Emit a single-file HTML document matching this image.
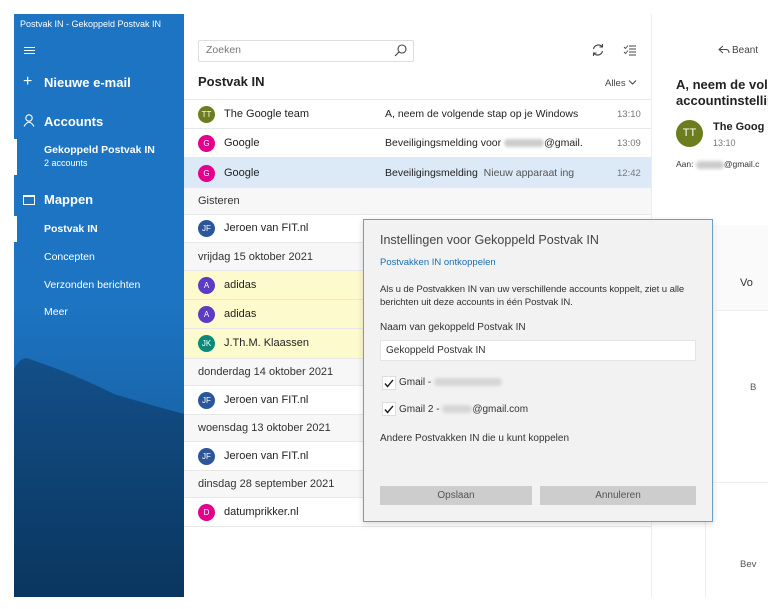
<!DOCTYPE html>
<html><head><meta charset="utf-8"><style>
*{margin:0;padding:0;box-sizing:border-box}
body{width:768px;height:609px;background:#fff;position:relative;overflow:hidden;font-family:"Liberation Sans",sans-serif;color:#222}
.a{position:absolute;white-space:nowrap}
#side{position:absolute;left:14px;top:14px;width:170px;height:583px;background:linear-gradient(#1d74c2 0,#1d74c2 290px,#1a6bb4 360px,#1865a8 420px);overflow:hidden}
.w{color:#fff}
.row{position:absolute;left:184px;width:467px;border-bottom:1px solid #e8e8e8}
.av{position:absolute;left:14px;width:17px;height:17px;border-radius:50%;color:#fff;font-size:8px;text-align:center;line-height:17px}
.nm{position:absolute;left:40px;font-size:11px;color:#222}
.hd{background:#f7f7f7}
.hd span{position:absolute;left:14px;font-size:11px;color:#333}
.sj{position:absolute;left:201px;font-size:10.5px;color:#222}
.tm{position:absolute;left:433px;font-size:9.5px;color:#777}
.blur{display:inline-block;width:40px;height:8px;background:#ccc;border-radius:4px;filter:blur(1.5px);vertical-align:middle}
</style></head><body>
<div id="side">
 <svg width="170" height="583" style="position:absolute;left:0;top:0">
  <defs><linearGradient id="m" x1="0" y1="0" x2="0" y2="1"><stop offset="0" stop-color="#134f88"/><stop offset="1" stop-color="#0a365f"/></linearGradient></defs>
  <path d="M0 355 Q8 340 18 346 Q60 360 100 380 Q140 392 170 400 L170 583 L0 583 Z" fill="url(#m)"/>
 </svg>
 <div class="a w" style="left:6px;top:5px;font-size:9px">Postvak IN - Gekoppeld Postvak IN</div>
 <div class="a" style="left:10px;top:33px;width:11px;height:1px;background:#fff;box-shadow:0 3px 0 #fff,0 6px 0 #fff"></div>
 <div class="a w" style="left:9px;top:59px;font-size:16px;font-weight:300">+</div>
 <div class="a w" style="left:30px;top:61px;font-size:13px;font-weight:bold">Nieuwe e-mail</div>
 <svg class="a" style="left:9px;top:100px" width="12" height="13"><circle cx="6" cy="4" r="3.2" fill="none" stroke="#fff" stroke-width="1.1"/><path d="M1 12.5 Q6 4 11 12.5" fill="none" stroke="#fff" stroke-width="1.1"/></svg>
 <div class="a w" style="left:30px;top:100px;font-size:13px;font-weight:bold">Accounts</div>
 <div class="a" style="left:0;top:125px;width:3px;height:36px;background:#fff"></div>
 <div class="a w" style="left:30px;top:130px;font-size:10.5px;font-weight:bold">Gekoppeld Postvak IN</div>
 <div class="a w" style="left:30px;top:144px;font-size:9px">2 accounts</div>
 <div class="a" style="left:9px;top:181px;width:12px;height:10px;border:1.2px solid #fff;border-top-width:2px"></div>
 <div class="a w" style="left:30px;top:178px;font-size:13px;font-weight:bold">Mappen</div>
 <div class="a" style="left:0;top:202px;width:3px;height:26px;background:#fff"></div>
 <div class="a w" style="left:30px;top:209px;font-size:10.5px;font-weight:bold">Postvak IN</div>
 <div class="a w" style="left:30px;top:237px;font-size:10.5px">Concepten</div>
 <div class="a w" style="left:30px;top:265px;font-size:10.5px">Verzonden berichten</div>
 <div class="a w" style="left:30px;top:292px;font-size:10.5px">Meer</div>
</div>

<div class="a" style="left:198px;top:40px;width:216px;height:22px;border:1px solid #ddd;border-radius:2px"></div>
<div class="a" style="left:206px;top:44px;font-size:10.5px;color:#777">Zoeken</div>
<svg class="a" style="left:394px;top:44px" width="13" height="13"><circle cx="8" cy="5" r="4" fill="none" stroke="#444" stroke-width="1.1"/><path d="M5 8 L1 12" stroke="#444" stroke-width="1.2"/></svg>
<svg class="a" style="left:591px;top:43px" width="14" height="14"><path d="M2.5 6 A5 5 0 0 1 11 3.5 M11.5 1 V4 H8.5 M11.5 8 A5 5 0 0 1 3 10.5 M2.5 13 V10 H5.5" fill="none" stroke="#444" stroke-width="1.1"/></svg>
<svg class="a" style="left:623px;top:44px" width="14" height="12"><path d="M1 3 L2.5 4.5 L5 1.5 M1 8 L2.5 9.5 L5 6.5 M6 2 H13 M6 5 H13 M6 8 H13 M6 11 H13" fill="none" stroke="#444" stroke-width="0.9"/></svg>
<div class="a" style="left:198px;top:74px;font-size:13px;font-weight:bold">Postvak IN</div>
<div class="a" style="left:605px;top:78px;font-size:9.5px;color:#444">Alles</div>
<svg class="a" style="left:628px;top:79px" width="9" height="7"><path d="M1 1.5 L4.5 5 L8 1.5" fill="none" stroke="#444" stroke-width="1"/></svg>

<div class="row" style="top:99px;height:1px;border-bottom:1px solid #e8e8e8"></div>
<div class="row" style="top:100px;height:29px"><div class="av" style="top:6px;background:#6b7d1f">TT</div><div class="nm" style="top:8px">The Google team</div><div class="sj" style="top:8px">A, neem de volgende stap op je Windows</div><div class="tm" style="top:9px">13:10</div></div>
<div class="row" style="top:129px;height:29px"><div class="av" style="top:6px;background:#e3008c">G</div><div class="nm" style="top:8px">Google</div><div class="sj" style="top:8px">Beveiligingsmelding voor <span class="blur"></span>@gmail.</div><div class="tm" style="top:9px">13:09</div></div>
<div class="row" style="top:158px;height:30px;background:#dce9f6"><div class="av" style="top:7px;background:#e3008c">G</div><div class="nm" style="top:9px">Google</div><div class="sj" style="top:9px">Beveiligingsmelding <span style="color:#555">&nbsp;Nieuw apparaat ing</span></div><div class="tm" style="top:10px">12:42</div></div>
<div class="row hd" style="top:188px;height:27px"><span style="top:7px">Gisteren</span></div>
<div class="row" style="top:215px;height:28px"><div class="av" style="top:5px;background:#2b579a">JF</div><div class="nm" style="top:7px">Jeroen van FIT.nl</div></div>
<div class="row hd" style="top:243px;height:28px"><span style="top:8px">vrijdag 15 oktober 2021</span></div>
<div class="row" style="top:271px;height:29px;background:#fdfbcd"><div class="av" style="top:6px;background:#5c3cc4">A</div><div class="nm" style="top:8px">adidas</div></div>
<div class="row" style="top:300px;height:29px;background:#fdfbcd"><div class="av" style="top:6px;background:#5c3cc4">A</div><div class="nm" style="top:8px">adidas</div></div>
<div class="row" style="top:329px;height:30px;background:#fdfbcd"><div class="av" style="top:6px;background:#0b8a78">JK</div><div class="nm" style="top:8px">J.Th.M. Klaassen</div></div>
<div class="row hd" style="top:359px;height:27px"><span style="top:7px">donderdag 14 oktober 2021</span></div>
<div class="row" style="top:386px;height:29px"><div class="av" style="top:6px;background:#2b579a">JF</div><div class="nm" style="top:8px">Jeroen van FIT.nl</div></div>
<div class="row hd" style="top:415px;height:27px"><span style="top:7px">woensdag 13 oktober 2021</span></div>
<div class="row" style="top:442px;height:29px"><div class="av" style="top:6px;background:#2b579a">JF</div><div class="nm" style="top:8px">Jeroen van FIT.nl</div></div>
<div class="row hd" style="top:471px;height:27px"><span style="top:7px">dinsdag 28 september 2021</span></div>
<div class="row" style="top:498px;height:29px"><div class="av" style="top:6px;background:#e3008c">D</div><div class="nm" style="top:8px">datumprikker.nl</div></div>

<div class="a" style="left:651px;top:14px;width:1px;height:583px;background:#eee"></div>
<svg class="a" style="left:718px;top:45px" width="12" height="10"><path d="M5 1 L1 4.5 L5 8 M1 4.5 H8 Q11 4.5 11 8" fill="none" stroke="#444" stroke-width="1"/></svg>
<div class="a" style="left:732px;top:45px;font-size:10px;color:#444">Beant</div>
<div class="a" style="left:676px;top:77px;font-size:13px;font-weight:bold;line-height:16px">A, neem de vol<br>accountinstellin</div>
<div class="a" style="left:676px;top:120px;width:27px;height:27px;border-radius:50%;background:#6b7d1f;color:#fff;font-size:11px;text-align:center;line-height:27px">TT</div>
<div class="a" style="left:713px;top:121px;font-size:11px;font-weight:bold">The Goog</div>
<div class="a" style="left:713px;top:138px;font-size:9px;color:#777">13:10</div>
<div class="a" style="left:676px;top:159px;font-size:8.5px;color:#333">Aan: <span class="blur" style="width:28px"></span>@gmail.c</div>
<div class="a" style="left:715px;top:225px;width:53px;height:86px;background:#fafafa;border-bottom:1px solid #eee"></div>
<div class="a" style="left:740px;top:277px;font-size:11px;color:#333">Vo</div>
<div class="a" style="left:750px;top:382px;font-size:9.5px;color:#555">B</div>
<div class="a" style="left:705px;top:482px;width:63px;height:1px;background:#eee"></div>
<div class="a" style="left:705px;top:310px;width:1px;height:287px;background:#eee"></div>
<div class="a" style="left:740px;top:559px;font-size:9.5px;color:#555">Bev</div>

<div class="a" style="left:363px;top:219px;width:350px;height:303px;background:#f2f2f2;border:1px solid #6c9fc4;box-shadow:0 2px 6px rgba(0,0,0,.15)">
 <div class="a" style="left:16px;top:13px;font-size:12.5px;color:#444">Instellingen voor Gekoppeld Postvak IN</div>
 <div class="a" style="left:16px;top:37px;font-size:9.5px;color:#1a6fb5">Postvakken IN ontkoppelen</div>
 <div class="a" style="left:16px;top:63px;font-size:9.6px;color:#333;line-height:13px;letter-spacing:-0.1px">Als u de Postvakken IN van uw verschillende accounts koppelt, ziet u alle<br>berichten uit deze accounts in één Postvak IN.</div>
 <div class="a" style="left:16px;top:102px;font-size:10px;color:#333">Naam van gekoppeld Postvak IN</div>
 <div class="a" style="left:16px;top:120px;width:316px;height:21px;background:#fff;border:1px solid #e4e4e4"></div>
 <div class="a" style="left:22px;top:125px;font-size:10px;color:#333">Gekoppeld Postvak IN</div>
 <div class="a" style="left:18px;top:156px;width:14px;height:14px;background:#fff;border:1px solid #ddd"></div>
 <svg class="a" style="left:20px;top:159px" width="10" height="9"><path d="M1 4.5 L3.5 7.5 L9 1" fill="none" stroke="#222" stroke-width="1.4"/></svg>
 <div class="a" style="left:35px;top:157px;font-size:10px;color:#333">Gmail - <span class="blur" style="width:68px;background:#d6d6d6"></span></div>
 <div class="a" style="left:18px;top:182px;width:14px;height:14px;background:#fff;border:1px solid #ddd"></div>
 <svg class="a" style="left:20px;top:185px" width="10" height="9"><path d="M1 4.5 L3.5 7.5 L9 1" fill="none" stroke="#222" stroke-width="1.4"/></svg>
 <div class="a" style="left:35px;top:184px;font-size:10px;color:#333">Gmail 2 - <span class="blur" style="width:30px;background:#d6d6d6"></span>@gmail.com</div>
 <div class="a" style="left:16px;top:213px;font-size:10px;color:#333">Andere Postvakken IN die u kunt koppelen</div>
 <div class="a" style="left:16px;top:266px;width:152px;height:19px;background:#cdcdcd;font-size:10px;color:#555;text-align:center;line-height:19px">Opslaan</div>
 <div class="a" style="left:176px;top:266px;width:156px;height:19px;background:#cdcdcd;font-size:10px;color:#555;text-align:center;line-height:19px">Annuleren</div>
</div>
</body></html>
